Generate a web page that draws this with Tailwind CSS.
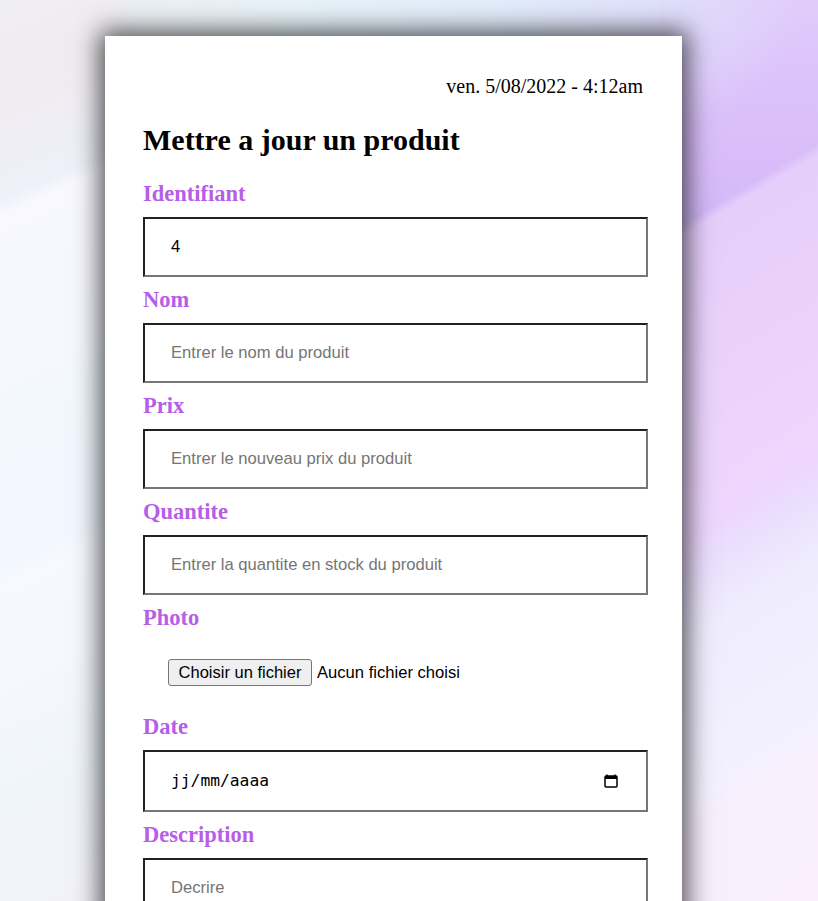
<!DOCTYPE html>
<html lang="fr">
<head>
    <meta charset="UTF-8">
    <meta name="viewport" content="width=device-width, initial-scale=1.0">
    <title>Mettre a jour un produit</title>
    <script src="https://cdn.jsdelivr.net/npm/@tailwindcss/browser@4"></script>
</head>
<body class="relative h-[901px] overflow-hidden bg-[linear-gradient(90deg,#efeef1_0%,#e8f2f8_35%,#e2edfb_60%,#e0e0fb_81%,#e0e0fb_100%)] font-['Liberation_Serif',serif]">
    <!-- fond flou : panneaux gauche et droit -->
    <div class="absolute left-0 top-0 h-[901px] w-[125px] bg-[linear-gradient(156deg,#efeef1_0px,#f0ecf1_100px,#eef1f9_183px,#f8f8fe_197px,#f7f8fe_300px,#f3f8fe_386px,#f0f7fe_512px,#f6f9ff_532px,#f5f8fe_620px,#f0f5fb_732px,#f3f1fa_874px)]"></div>
    <div class="absolute right-0 top-0 h-[901px] w-[158px] bg-[radial-gradient(ellipse_140px_130px_at_0px_0px,#e0e0fb_0%,#e0e0fb00_100%),linear-gradient(149deg,#e8cdfb00_204px,#e6cefb_214px,#eed6fd_474px,#eadffd_505px,#efecfe_560px,#f3f1fe_700px,#f9eefc_730px,#faeefc_853px),linear-gradient(180deg,#e0ccfa_0px,#dcc2fa_80px,#d8bcf9_170px,#d1b7fa_240px)]"></div>

    <!-- carte du formulaire -->
    <main class="relative ml-[105px] mt-[36px] h-[900px] w-[577px] bg-white pl-[38px] pr-[34px] pt-[38px] shadow-[0_0_24px_5px_rgba(0,0,0,0.68)]">
        <p class="mr-[5px] text-right text-[20px] leading-[24px] text-black">ven. 5/08/2022 - 4:12am</p>

        <h1 class="mt-[23px] text-[30px] font-bold leading-[37px] text-black">Mettre a jour un produit</h1>

        <form class="mt-[22px] flex flex-col font-['Liberation_Sans',sans-serif]">
            <label class="font-['Liberation_Serif',serif] text-[22.5px] font-bold leading-[28px] text-[#b65ee8]">Identifiant</label>
            <input type="text" value="4" class="mt-[9px] h-[60px] w-[505px] border-2 border-t-[#212121] border-r-[#767676] border-b-[#767676] border-l-[#212121] pl-[26px] text-[16.6px] text-black outline-none">

            <label class="mt-[9px] font-['Liberation_Serif',serif] text-[22.5px] font-bold leading-[28px] text-[#b65ee8]">Nom</label>
            <input type="text" placeholder="Entrer le nom du produit" class="mt-[9px] h-[60px] w-[505px] border-2 border-t-[#212121] border-r-[#767676] border-b-[#767676] border-l-[#212121] pl-[26px] text-[16.6px] text-black outline-none placeholder:text-[#757575]">

            <label class="mt-[9px] font-['Liberation_Serif',serif] text-[22.5px] font-bold leading-[28px] text-[#b65ee8]">Prix</label>
            <input type="text" placeholder="Entrer le nouveau prix du produit" class="mt-[9px] h-[60px] w-[505px] border-2 border-t-[#212121] border-r-[#767676] border-b-[#767676] border-l-[#212121] pl-[26px] text-[16.6px] text-black outline-none placeholder:text-[#757575]">

            <label class="mt-[9px] font-['Liberation_Serif',serif] text-[22.5px] font-bold leading-[28px] text-[#b65ee8]">Quantite</label>
            <input type="text" placeholder="Entrer la quantite en stock du produit" class="mt-[9px] h-[60px] w-[505px] border-2 border-t-[#212121] border-r-[#767676] border-b-[#767676] border-l-[#212121] pl-[26px] text-[16.6px] text-black outline-none placeholder:text-[#757575]">

            <label class="mt-[9px] font-['Liberation_Serif',serif] text-[22.5px] font-bold leading-[28px] text-[#b65ee8]">Photo</label>
            <div class="mt-[10px] flex h-[60px] items-center pl-[25px] text-[16.6px] text-black">
                <button type="button" class="flex h-[27px] w-[144px] items-center justify-center rounded-[3px] border border-[#767676] bg-[#efefef] text-[16.5px]">Choisir un fichier</button>
                <span class="ml-[5px] pt-[2px]">Aucun fichier choisi</span>
            </div>

            <label class="mt-[11px] font-['Liberation_Serif',serif] text-[22.5px] font-bold leading-[28px] text-[#b65ee8]">Date</label>
            <div class="mt-[9px] flex h-[62px] w-[505px] items-center justify-between border-2 border-t-[#212121] border-r-[#767676] border-b-[#767676] border-l-[#212121] pl-[26px] pr-[28px] text-black">
                <span class="font-['DejaVu_Sans_Mono',monospace] text-[16.3px]">jj/mm/aaaa</span>
                <svg width="14" height="14" viewBox="0 0 14 14" class="block">
                    <path d="M3 0.5v1.5M11 0.5v1.5" stroke="#000" stroke-width="1.5" fill="none"/>
                    <rect x="1" y="2" width="12" height="11" rx="1" fill="#fff" stroke="#000" stroke-width="1.5"/>
                    <rect x="1" y="2" width="12" height="3" fill="#000"/>
                </svg>
            </div>

            <label class="mt-[9px] font-['Liberation_Serif',serif] text-[22.5px] font-bold leading-[28px] text-[#b65ee8]">Description</label>
            <textarea placeholder="Decrire" class="mt-[9px] h-[120px] w-[505px] resize-none border-2 border-t-[#212121] border-r-[#767676] border-b-[#767676] border-l-[#212121] pl-[26px] pt-[18px] text-[16.6px] leading-[20px] text-black outline-none placeholder:text-[#757575]"></textarea>
        </form>
    </main>
</body>
</html>
